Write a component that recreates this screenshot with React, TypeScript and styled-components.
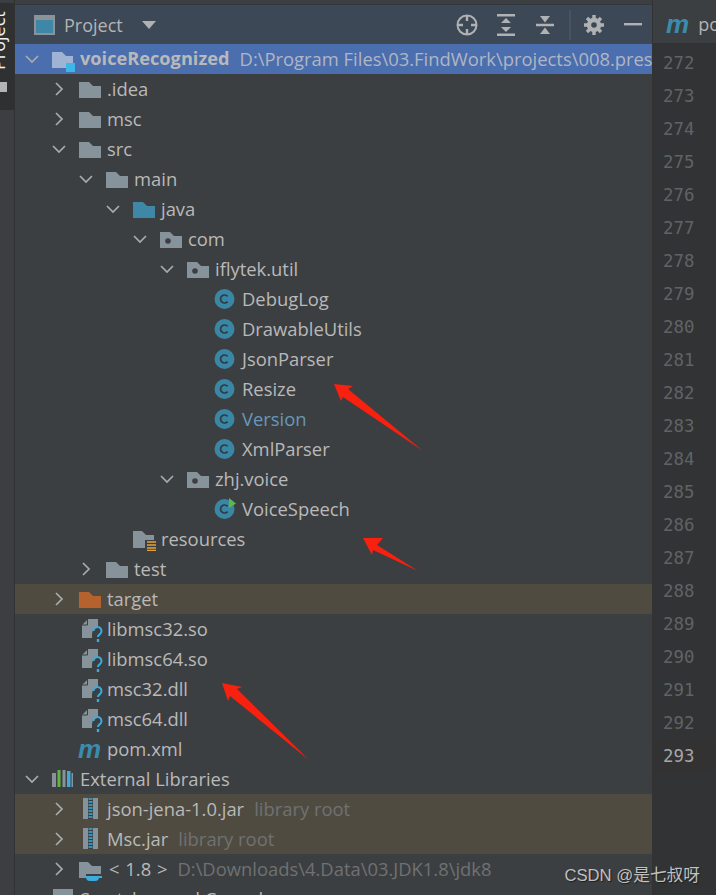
import React from "react";
import styled, { createGlobalStyle } from "styled-components";

const Global = createGlobalStyle`
  html, body { margin: 0; padding: 0; background: #3c3f41; }
  #root { width: 716px; height: 895px; overflow: hidden; }
`;
const UI = `"Open Sans", "Noto Sans", "Liberation Sans", sans-serif`;

const Root = styled.div`
  position: relative; display: flex; width: 716px; height: 895px; overflow: hidden;
  background: #3c3f41; font-family: ${UI};
`;
const Sidebar = styled.aside`
  width: 14px; flex: none; border-right: 1px solid #323232; padding-top: 3px; overflow: hidden;
`;
const SideTab = styled.div`
  width: 14px; height: 107px; background: #2e3031; overflow: hidden; display: flex; flex-direction: column;
  align-items: flex-start;
`;
const SideLabel = styled.div`
  writing-mode: vertical-rl; transform: rotate(180deg); margin: 0 0 0 -11px; height: 67px; width: 18px;
  font-size: 18px; line-height: 18px; color: #f0f0f0; text-align: left; flex: none;
`;
const SideGlyph = styled.div`
  width: 7px; height: 10px; background: #b4b4b4; margin-top: 12px;
`;
const Panel = styled.section`
  width: 637px; flex: none; display: flex; flex-direction: column; overflow: hidden;
  border-right: 1px solid #323232;
`;
const Header = styled.header`
  margin-top: 4px; height: 40px; flex: none; background: #3d4856; display: flex; align-items: center;
  padding: 0 3px 0 19px; color: #afb1b3; border-top: 1px solid #33373c; box-sizing: border-box;
`;
const HeaderTitle = styled.span`
  font-size: 18px; margin-left: 8px; color: #b4b4b4;
`;
const Spacer = styled.div`flex: 1;`;
const Tool = styled.button<{ $w: number }>`
  all: unset; width: ${p => p.$w}px; display: flex; align-items: center; justify-content: center;
`;
const Sep = styled.div`
  width: 2px; height: 30px; background: #4a535d; margin-left: 5px;
`;
const Row = styled.div<{ $depth: number; $bg?: string }>`
  height: 30px; flex: none; display: flex; align-items: center; box-sizing: border-box;
  padding-left: ${p => 8 + p.$depth * 27}px;
  background: ${p => p.$bg ?? "transparent"}; white-space: nowrap; overflow: hidden;
`;
const ChevronSlot = styled.span`
  width: 29px; flex: none; display: flex; align-items: center;
`;
const IconSlot = styled.span`
  width: 28px; height: 24px; flex: none; display: flex; align-items: center;
`;
const Label = styled.span<{ $color?: string; $bold?: boolean; $spaced?: boolean }>`
  font-size: ${p => (p.$bold ? 18.2 : 18.4)}px; color: ${p => p.$color ?? "#b9b9b9"}; font-weight: ${p => (p.$bold ? 700 : 400)};
  margin-bottom: 2px;
  ${p => p.$spaced && "word-spacing: 1px; margin-left: 2px;"}
`;
const Hint = styled.span<{ $gap?: number; $color?: string }>`
  font-size: 18.4px; color: ${p => p.$color ?? "#6f7173"}; margin-left: ${p => p.$gap ?? 10}px;
  margin-bottom: 2px;
`;
const MavenMark = styled.span<{ $size: number }>`
  font-family: "Liberation Sans", sans-serif; font-style: italic; font-weight: 700;
  font-size: ${p => p.$size}px; line-height: 1; color: #3b8cac; margin-left: -1px;
`;
const Editor = styled.section`
  flex: 1; display: flex; flex-direction: column; overflow: hidden;
`;
const EditorTab = styled.div`
  margin-top: 4px; height: 39px; flex: none; display: flex; align-items: center; padding-left: 14px; gap: 9px;
  background: #3c3f41; border-bottom: 1px solid #323232; overflow: hidden;
`;
const TabText = styled.span`
  font-size: 18px; color: #b4b4b4; white-space: nowrap;
`;
const Gutter = styled.div`
  flex: 1; background: #313335; padding-top: 3px;
`;
const LineNo = styled.div<{ $current?: boolean }>`
  height: 33px; line-height: 33px; padding-left: 10px;
  font-family: "DejaVu Sans Mono", "Liberation Mono", monospace; font-size: 17.4px;
  color: ${p => (p.$current ? "#a4a6a8" : "#606366")};
  background: ${p => (p.$current ? "#323232" : "transparent")};
`;
const Overlay = styled.svg`
  position: absolute; inset: 0; pointer-events: none;
`;
const Watermark = styled.div`
  position: absolute; right: 16px; bottom: 9px; font-size: 16.7px; color: #c0c0c0; line-height: 20px;
  font-family: "Liberation Sans", "Noto Sans CJK SC", sans-serif; text-shadow: 1px 1px 1px #1e1e1e;
`;

const Chevron = ({ open }: { open?: boolean }) => (
  <svg width="18" height="18" viewBox="0 0 18 18" fill="none" stroke="#a9abad" strokeWidth="1.7">
    {open ? <path d="M3 6l6 6 6-6" /> : <path d="M6 3l6 6-6 6" />}
  </svg>
);
const FOLDER = "M0 4h10l4 4h8v12H0z";
const Folder = ({ color = "#87939a", children }: { color?: string; children?: React.ReactNode }) => (
  <svg width="24" height="22" viewBox="0 0 24 22">
    <path d={FOLDER} fill={color} />
    {children}
  </svg>
);
const PackageIcon = () => (
  <Folder><circle cx="8" cy="13" r="2.8" fill="#3c3f41" /></Folder>
);
const ModuleIcon = () => (
  <svg width="24" height="26" viewBox="0 0 24 26">
    <path d="M0 6h10l4 4h7v7h-7v5H0z" fill="#9fb4d2" />
    <rect x="14" y="17" width="9" height="9" fill="#3db6e8" />
  </svg>
);
const ResourceIcon = () => (
  <svg width="24" height="24" viewBox="0 0 24 24">
    <path d="M0 4h9l4 4h8v5h-9v8H0z" fill="#87939a" />
    <path d="M14 15h9M14 18h9M14 21h9M14 23.6h9" stroke="#e2a33d" strokeWidth="1.6" />
  </svg>
);
const ClassIcon = ({ run }: { run?: boolean }) => (
  <svg width="22" height="22" viewBox="0 0 22 22" fill="none">
    <circle cx="10.5" cy="11" r="10" fill="#3a86a5" />
    <path d="M13.6 8.4a4 4 0 1 0 0 5.2" stroke="#2f3b42" strokeWidth="1.7" />
    {run && <path d="M15 0l7 5.5-7 4.5z" fill="#5db84a" />}
  </svg>
);
const UnknownFile = () => (
  <svg width="22" height="26" viewBox="0 0 22 26" fill="none" style={{ marginLeft: 3 }}>
    <path d="M6 3h10v8a7 7 0 0 0-6 7v4H0V9z" fill="#87939a" />
    <path d="M5.5 3v6H0" stroke="#3c3f41" strokeWidth="1" />
    <path d="M11.5 15a4 4 0 1 1 6.2 3.3c-1.1.7-1.7 1.4-1.7 2.7" stroke="#3dacdc" strokeWidth="2" />
    <rect x="14.8" y="23" width="2.4" height="3" fill="#3dacdc" />
  </svg>
);
const LibIcon = () => (
  <svg width="24" height="22" viewBox="0 0 24 22">
    <rect x="0" y="5" width="4" height="14" fill="#8a9299" />
    <rect x="5.5" y="2" width="3" height="17" fill="#62b543" />
    <rect x="10.5" y="2" width="3" height="17" fill="#8a9299" />
    <rect x="15" y="3" width="3.5" height="16" fill="#3dacdc" />
    <rect x="19.5" y="5" width="1.5" height="14" fill="#8a9299" />
  </svg>
);
const JarIcon = () => (
  <svg width="20" height="22" viewBox="0 0 20 22" style={{ marginLeft: 4 }}>
    <path d="M0 0h15v21H0z" fill="#87939a" />
    <rect x="5" y="0" width="5" height="21" fill="#3c3f41" />
    <path d="M5.5 1h4M5.5 4h4M5.5 7h4M5.5 10h4M5.5 13h4M5.5 16h4M5.5 19h4" stroke="#3dacdc" strokeWidth="1.6" />
  </svg>
);
const JdkIcon = () => (
  <svg width="24" height="26" viewBox="0 0 24 26">
    <path d="M0 6h9l4 4h9v8H7v4H0z" fill="#87939a" />
    <path d="M7 20h13v1a4 4 0 0 1-4 4h-5a4 4 0 0 1-4-4z" fill="#3dacdc" />
    <path d="M20 20h3v2h-3z" fill="#3dacdc" />
  </svg>
);
const TerminalIcon = () => (
  <svg width="22" height="22" viewBox="0 0 22 22">
    <rect x="1" y="1" width="20" height="20" fill="#87939a" />
  </svg>
);

type Node = {
  d: number; icon: React.ReactNode; label: string; chev?: "o" | "c"; bg?: string;
  color?: string; hint?: string; spaced?: boolean;
};
const TAN = "#4f4b41";
const C = <ClassIcon />;
const Q = <UnknownFile />;
const F = <Folder />;
const rows: Node[] = [
  { d: 1, chev: "c", icon: F, label: ".idea" },
  { d: 1, chev: "c", icon: F, label: "msc" },
  { d: 1, chev: "o", icon: F, label: "src" },
  { d: 2, chev: "o", icon: F, label: "main" },
  { d: 3, chev: "o", icon: <Folder color="#3f87a6" />, label: "java" },
  { d: 4, chev: "o", icon: <PackageIcon />, label: "com" },
  { d: 5, chev: "o", icon: <PackageIcon />, label: "iflytek.util" },
  { d: 6, icon: C, label: "DebugLog" },
  { d: 6, icon: C, label: "DrawableUtils" },
  { d: 6, icon: C, label: "JsonParser" },
  { d: 6, icon: C, label: "Resize" },
  { d: 6, icon: C, label: "Version", color: "#6897bb" },
  { d: 6, icon: C, label: "XmlParser" },
  { d: 5, chev: "o", icon: <PackageIcon />, label: "zhj.voice" },
  { d: 6, icon: <ClassIcon run />, label: "VoiceSpeech" },
  { d: 3, icon: <ResourceIcon />, label: "resources" },
  { d: 2, chev: "c", icon: F, label: "test" },
  { d: 1, chev: "c", icon: <Folder color="#b5622f" />, label: "target", bg: TAN },
  { d: 1, icon: Q, label: "libmsc32.so" },
  { d: 1, icon: Q, label: "libmsc64.so" },
  { d: 1, icon: Q, label: "msc32.dll" },
  { d: 1, icon: Q, label: "msc64.dll" },
  { d: 1, icon: <MavenMark $size={26}>m</MavenMark>, label: "pom.xml" },
  { d: 0, chev: "o", icon: <LibIcon />, label: "External Libraries" },
  { d: 1, chev: "c", icon: <JarIcon />, label: "json-jena-1.0.jar", hint: "library root", bg: TAN },
  { d: 1, chev: "c", icon: <JarIcon />, label: "Msc.jar", hint: "library root", bg: TAN },
  { d: 1, chev: "c", icon: <JdkIcon />, label: "< 1.8 >", spaced: true, hint: "D:\\Downloads\\4.Data\\03.JDK1.8\\jdk8" },
  { d: 0, icon: <TerminalIcon />, label: "Scratches and Consoles" },
];
const lines = Array.from({ length: 22 }, (_, i) => 272 + i);

export default function App() {
  return (
    <Root>
      <Global />
      <Sidebar>
        <SideTab>
          <SideLabel>Project</SideLabel>
          <SideGlyph />
        </SideTab>
      </Sidebar>
      <Panel>
        <Header>
          <svg width="22" height="20" viewBox="0 0 22 20">
            <rect x="0" y="0" width="21" height="20" fill="#8b9298" />
            <rect x="2" y="5" width="17" height="13" fill="#3f87a6" />
          </svg>
          <HeaderTitle>Project</HeaderTitle>
          <svg width="14" height="8" viewBox="0 0 14 8" style={{ marginLeft: 19 }}>
            <path d="M0 0h14L7 8z" fill="#afb1b3" />
          </svg>
          <Spacer />
          <Tool $w={39}>
            <svg width="22" height="22" viewBox="0 0 22 22" fill="none" stroke="#afb1b3">
              <circle cx="11" cy="11" r="9.5" strokeWidth="2" />
              <path d="M11 1v6M11 15v6M1 11h6M15 11h6" strokeWidth="2.4" />
            </svg>
          </Tool>
          <Tool $w={39}>
            <svg width="18" height="22" viewBox="0 0 18 22" fill="#afb1b3">
              <path d="M0 0h18v2.4H0zM0 19.6h18V22H0zM9 4l5 5H4zM9 18l-5-5h10z" />
            </svg>
          </Tool>
          <Tool $w={39}>
            <svg width="18" height="22" viewBox="0 0 18 22" fill="#afb1b3">
              <path d="M0 9.8h18v2.4H0zM9 8.6L4 2h10zM9 13.4L14 20H4z" />
            </svg>
          </Tool>
          <Sep />
          <Tool $w={46}>
            <svg width="20" height="20" viewBox="0 0 20 20" fill="none" stroke="#afb1b3">
              <circle cx="10" cy="10" r="5" strokeWidth="4.4" />
              <path d="M10 0v4M10 16v4M0 10h4M16 10h4M3 3l2.8 2.8M14.2 14.2L17 17M3 17l2.8-2.8M14.2 5.8L17 3" strokeWidth="3.4" />
            </svg>
          </Tool>
          <Tool $w={32}>
            <svg width="18" height="3" viewBox="0 0 18 3"><rect width="18" height="2.4" fill="#afb1b3" /></svg>
          </Tool>
        </Header>
        <Row $depth={0} $bg="#4b6eaf">
          <ChevronSlot><Chevron open /></ChevronSlot>
          <IconSlot><ModuleIcon /></IconSlot>
          <Label $bold>voiceRecognized</Label>
          <Hint $gap={10} $color="#b0b6c2">D:\Program Files\03.FindWork\projects\008.presentation</Hint>
        </Row>
        {rows.map(r => (
          <Row key={r.label} $depth={r.d} $bg={r.bg}>
            <ChevronSlot>{r.chev && <Chevron open={r.chev === "o"} />}</ChevronSlot>
            <IconSlot>{r.icon}</IconSlot>
            <Label $color={r.color} $spaced={r.spaced}>{r.label}</Label>
            {r.hint && <Hint>{r.hint}</Hint>}
          </Row>
        ))}
      </Panel>
      <Editor>
        <EditorTab>
          <MavenMark $size={26}>m</MavenMark>
          <TabText>pom.xml</TabText>
        </EditorTab>
        <Gutter>
          {lines.map(n => <LineNo key={n} $current={n === 293}>{n}</LineNo>)}
        </Gutter>
      </Editor>
      <Overlay width="716" height="895" viewBox="0 0 716 895">
        <path d="M334 384L353 386L348 389L423 451L343 397L341 401z" fill="#f8200f" />
        <path d="M363 538H383L377 545L418 571L373 550L372 555z" fill="#f8200f" />
        <path d="M222 683L242 687L237 689L309 760L230 696L228 701z" fill="#f8200f" />
      </Overlay>
      <Watermark>CSDN @是七叔呀</Watermark>
    </Root>
  );
}
